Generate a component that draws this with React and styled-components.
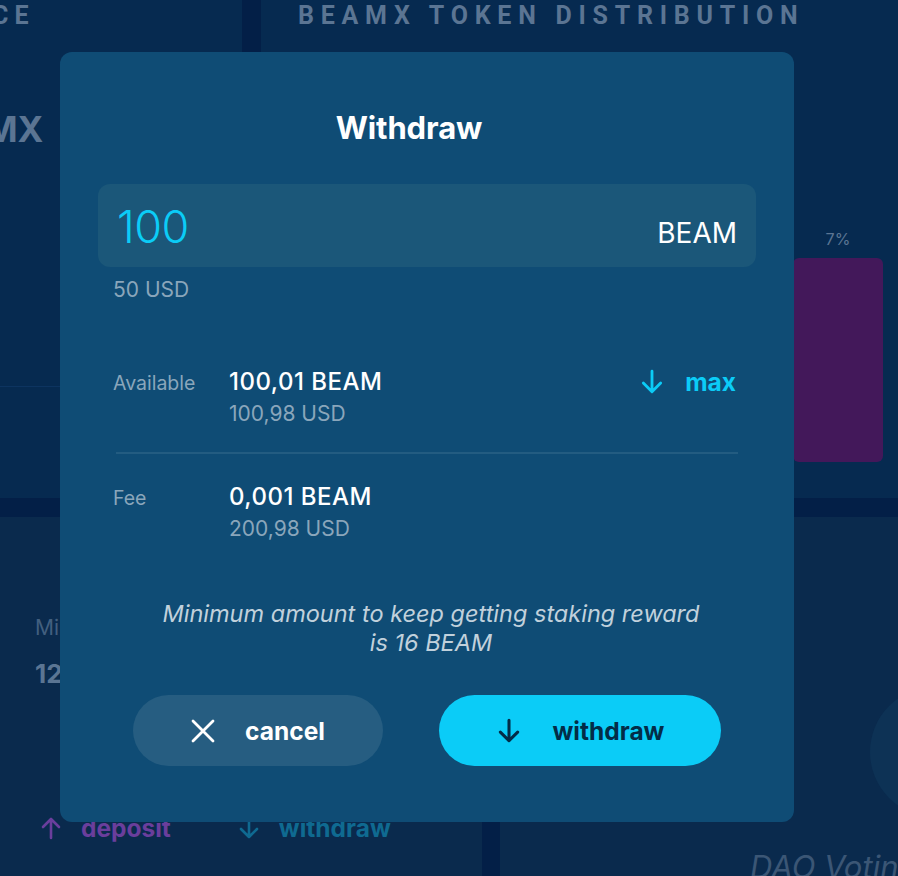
import React from "react";
import styled, { createGlobalStyle } from "styled-components";

const GlobalStyle = createGlobalStyle`
  html, body { margin: 0; padding: 0; }
  body {
    background: #031f47;
    font-family: Inter, "Noto Sans", sans-serif;
    -webkit-font-smoothing: antialiased;
  }
`;

const Page = styled.div`
  position: relative;
  width: 898px;
  height: 876px;
  overflow: hidden;
  background: #031f47;
`;

/* ---------- dimmed dashboard behind the dialog ---------- */
const Dashboard = styled.div`
  display: grid;
  grid-template-rows: 498px 1fr;
  row-gap: 19px;
  height: 100%;
`;

const PanelRow = styled.div`
  display: grid;
  grid-template-columns: ${(p) => p.$cols};
  column-gap: ${(p) => p.$gap}px;
  min-height: 0;
`;

const Panel = styled.div`
  position: relative;
  background: ${(p) => (p.$bottom ? "#0a2a4d" : "#062a50")};
  overflow: hidden;
  display: flex;
  flex-direction: column;
  padding: ${(p) => p.$pad || "0"};
  min-width: 0;
`;

const SectionHeading = styled.div`
  font-family: Roboto, Inter, sans-serif;
  font-weight: 700;
  font-size: 25px;
  letter-spacing: ${(p) => p.$ls || 6.2}px;
  text-indent: ${(p) => p.$indent || 0}px;
  color: #5b7593;
  line-height: 30px;
  white-space: nowrap;
`;

const BigFigure = styled.div`
  margin-top: 78px;
  font-weight: 700;
  font-size: 35px;
  text-indent: -15px;
  color: #5b7593;
  line-height: 40px;
  white-space: nowrap;
`;

const PanelDivider = styled.div`
  margin-top: 237px;
  height: 1px;
  background: #0d3460;
`;

const Chart = styled.div`
  display: flex;
  justify-content: flex-end;
  align-items: flex-end;
  margin-top: 199px;
  padding-right: 15px;
`;

const BarColumn = styled.div`
  display: flex;
  flex-direction: column;
  align-items: center;
  gap: 9px;
`;

const BarLabel = styled.div`
  font-size: 16px;
  color: #5b7593;
  line-height: 19px;
`;

const Bar = styled.div`
  width: 90px;
  height: 204px;
  border-radius: 6px;
  background: #43185a;
`;

const StatLabel = styled.div`
  margin-top: 98px;
  font-size: 21px;
  color: #425f7f;
  line-height: 25px;
`;

const StatValue = styled.div`
  margin-top: 19px;
  font-weight: 700;
  font-size: 26px;
  color: #5b7593;
  line-height: 30px;
`;

const ActionLinks = styled.div`
  margin-top: auto;
  margin-bottom: 34px;
  display: flex;
  gap: 66px;
  padding-left: 4px;
`;

const ActionLink = styled.div`
  display: flex;
  align-items: center;
  gap: 18px;
  font-weight: 700;
  font-size: 24.5px;
  color: ${(p) => p.$color};
  line-height: 28px;
`;

const Circle = styled.div`
  position: absolute;
  left: 370px;
  top: 170px;
  width: 130px;
  height: 130px;
  border-radius: 50%;
  background: #0d3255;
`;

const FaintTitle = styled.div`
  margin-top: auto;
  margin-bottom: -10px;
  padding-left: 250px;
  font-style: italic;
  font-size: 31px;
  color: #3b5675;
  white-space: nowrap;
  line-height: 38px;
`;

/* ---------- dialog ---------- */
const Overlay = styled.div`
  position: absolute;
  inset: 0;
`;

const Dialog = styled.div`
  position: absolute;
  left: 60px;
  top: 52px;
  width: 734px;
  height: 770px;
  box-sizing: border-box;
  border-radius: 12px;
  background: #0f4c75;
  padding: 57px 38px 0;
  display: flex;
  flex-direction: column;
`;

const Title = styled.h2`
  margin: 0;
  padding-right: 36px;
  text-align: center;
  font-size: 31px;
  font-weight: 700;
  line-height: 38px;
  color: #ffffff;
  letter-spacing: -0.1px;
`;

const AmountBox = styled.div`
  margin-top: 37px;
  height: 83px;
  box-sizing: border-box;
  border-radius: 12px;
  background: #1b5779;
  padding: 20px 19px 0 19px;
  display: flex;
  align-items: baseline;
  justify-content: space-between;
`;

const AmountValue = styled.div`
  font-size: 45px;
  font-weight: 300;
  line-height: 45px;
  color: #0bccf7;
  letter-spacing: -0.5px;
`;

const AmountCurrency = styled.div`
  font-size: 28px;
  font-weight: 400;
  line-height: 34px;
  color: #ffffff;
`;

const Secondary = styled.div`
  font-size: 21px;
  line-height: 25px;
  color: #8aa6bb;
  margin-top: ${(p) => p.$mt || 0}px;
  padding-left: ${(p) => p.$pl || 0}px;
`;

const InfoRow = styled.div`
  margin-top: ${(p) => p.$mt}px;
  display: grid;
  grid-template-columns: 116px 1fr auto;
  align-items: baseline;
  padding: 0 20px 0 15px;
`;

const InfoLabel = styled.div`
  font-size: 19.5px;
  line-height: 25px;
  color: #8aa6bb;
`;

const InfoValue = styled.div`
  font-size: 24px;
  font-weight: 500;
  line-height: 28px;
  letter-spacing: 0.5px;
  color: #ffffff;
`;

const MaxLink = styled.div`
  display: flex;
  align-items: center;
  gap: 20px;
  font-size: 24.5px;
  font-weight: 700;
  line-height: 28px;
  color: #0bccf7;
  align-self: start;
`;

const Divider = styled.div`
  margin: 26px 18px 0;
  height: 2px;
  background: #235c81;
`;

const Note = styled.p`
  margin: 58px 0 0;
  text-align: center;
  font-size: 23.5px;
  font-style: italic;
  line-height: 29px;
  color: #c1d1dc;
  padding-left: 8px;
`;

const Buttons = styled.div`
  margin-top: 38px;
  display: flex;
  justify-content: center;
  gap: 56px;
`;

const Button = styled.button`
  width: ${(p) => p.$w}px;
  height: 71px;
  border: none;
  border-radius: 36px;
  background: ${(p) => (p.$primary ? "#0bccf7" : "#265d81")};
  color: ${(p) => (p.$primary ? "#032c47" : "#ffffff")};
  display: flex;
  align-items: center;
  justify-content: center;
  gap: ${(p) => p.$gap}px;
  font-family: Inter, sans-serif;
  font-size: 24.5px;
  font-weight: 700;
  padding: 0;
  cursor: pointer;
`;

const ArrowDown = ({ size = 24, color = "currentColor", width = 2.6 }) => (
  <svg width={size} height={size} viewBox="0 0 24 24" fill="none">
    <path
      d="M12 2v19M4 13l8 8 8-8"
      stroke={color}
      strokeWidth={width}
      strokeLinecap="round"
      strokeLinejoin="round"
    />
  </svg>
);

const ArrowUp = ({ size = 24, color = "currentColor", width = 2.6 }) => (
  <svg width={size} height={size} viewBox="0 0 24 24" fill="none">
    <path
      d="M12 22V3M4 11l8-8 8 8"
      stroke={color}
      strokeWidth={width}
      strokeLinecap="round"
      strokeLinejoin="round"
    />
  </svg>
);

const CrossIcon = () => (
  <svg width="24" height="24" viewBox="0 0 24 24" fill="none">
    <path
      d="M2 2l20 20M22 2L2 22"
      stroke="#ffffff"
      strokeWidth="2.8"
      strokeLinecap="round"
    />
  </svg>
);

export default function App() {
  return (
    <>
      <GlobalStyle />
      <Page>
        <Dashboard>
          <PanelRow $cols="242px 1fr" $gap={19}>
            <Panel $pad="1px 0 0 0">
              <SectionHeading $indent={-8}>CE</SectionHeading>
              <BigFigure>MX</BigFigure>
              <PanelDivider />
            </Panel>
            <Panel $pad="1px 0 0 37px">
              <SectionHeading $ls={6.75}>BEAMX TOKEN DISTRIBUTION</SectionHeading>
              <Chart>
                <BarColumn>
                  <BarLabel>7%</BarLabel>
                  <Bar />
                </BarColumn>
              </Chart>
            </Panel>
          </PanelRow>
          <PanelRow $cols="482px 1fr" $gap={18}>
            <Panel $bottom $pad="0 0 0 35px">
              <StatLabel>Minimum</StatLabel>
              <StatValue>12</StatValue>
              <ActionLinks>
                <ActionLink $color="#6a3e9c">
                  <ArrowUp size={24} />
                  deposit
                </ActionLink>
                <ActionLink $color="#0f6a91">
                  <ArrowDown size={24} />
                  withdraw
                </ActionLink>
              </ActionLinks>
            </Panel>
            <Panel $bottom>
              <Circle />
              <FaintTitle>DAO Voting</FaintTitle>
            </Panel>
          </PanelRow>
        </Dashboard>

        <Overlay>
          <Dialog>
            <Title>Withdraw</Title>
            <AmountBox>
              <AmountValue>100</AmountValue>
              <AmountCurrency>BEAM</AmountCurrency>
            </AmountBox>
            <Secondary $mt={10} $pl={15}>50 USD</Secondary>

            <InfoRow $mt={66}>
              <InfoLabel>Available</InfoLabel>
              <div>
                <InfoValue>100,01 BEAM</InfoValue>
                <Secondary $mt={5}>100,98 USD</Secondary>
              </div>
              <MaxLink>
                <ArrowDown size={26} />
                max
              </MaxLink>
            </InfoRow>

            <Divider />

            <InfoRow $mt={29}>
              <InfoLabel>Fee</InfoLabel>
              <div>
                <InfoValue>0,001 BEAM</InfoValue>
                <Secondary $mt={5}>200,98 USD</Secondary>
              </div>
            </InfoRow>

            <Note>
              Minimum amount to keep getting staking reward
              <br />
              is 16 BEAM
            </Note>

            <Buttons>
              <Button $w={250} $gap={30}>
                <CrossIcon />
                cancel
              </Button>
              <Button $w={282} $gap={31} $primary>
                <ArrowDown size={26} width={2.8} />
                withdraw
              </Button>
            </Buttons>
          </Dialog>
        </Overlay>
      </Page>
    </>
  );
}
